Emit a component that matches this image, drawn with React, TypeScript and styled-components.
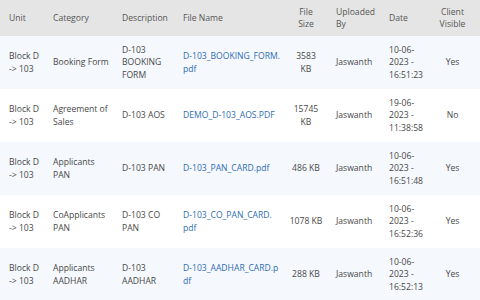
import React from 'react'
import styled, { createGlobalStyle } from 'styled-components'

const GlobalStyle = createGlobalStyle`
  body {
    margin: 0;
    background: #ffffff;
    font-family: 'Open Sans', 'Liberation Sans', sans-serif;
  }
`

const StyledTable = styled.table`
  width: 480px;
  border-collapse: collapse;
  table-layout: fixed;

  font-size: 8.6px;
  line-height: 12.5px;
  color: #484848;
`

const StyledHeadCell = styled.th<{ $center?: boolean }>`
  height: 36px;
  box-sizing: border-box;
  padding: 0 3px 0 9px;

  font-weight: 400;
  color: #555555;
  text-align: ${({ $center }) => ($center ? 'center' : 'left')};
  vertical-align: middle;

  background: #e5e5e5;

  ${({ $center }) => $center && 'padding: 0 4px;'}
`

const StyledRow = styled.tr<{ $shaded: boolean }>`
  background: ${({ $shaded }) => ($shaded ? '#f5f8fd' : '#ffffff')};
`

const StyledCell = styled.td<{ $center?: boolean }>`
  padding: 7.75px 3px 7.75px 9px;

  text-align: ${({ $center }) => ($center ? 'center' : 'left')};
  vertical-align: middle;

  ${({ $center }) => $center && 'padding-left: 4px; padding-right: 4px;'}
`

const StyledFileLink = styled.a`
  color: #2f6db3;
  text-decoration: none;
  white-space: nowrap;
`

const StyledLines = styled.span`
  white-space: nowrap;
`

interface Document {
  unit: string
  category: string
  description: string
  file: string[]
  size: string[]
  uploadedBy: string
  date: string
  visible: string
}

const documents: Document[] = [
  {
    unit: 'Block D -> 103',
    category: 'Booking Form',
    description: 'D-103 BOOKING FORM',
    file: ['D-103_BOOKING_FORM.', 'pdf'],
    size: ['3583', 'KB'],
    uploadedBy: 'Jaswanth',
    date: '10-06-2023 - 16:51:23',
    visible: 'Yes',
  },
  {
    unit: 'Block D -> 103',
    category: 'Agreement of Sales',
    description: 'D-103 AOS',
    file: ['DEMO_D-103_AOS.PDF'],
    size: ['15745', 'KB'],
    uploadedBy: 'Jaswanth',
    date: '19-06-2023 - 11:38:58',
    visible: 'No',
  },
  {
    unit: 'Block D -> 103',
    category: 'Applicants PAN',
    description: 'D-103 PAN',
    file: ['D-103_PAN_CARD.pdf'],
    size: ['486 KB'],
    uploadedBy: 'Jaswanth',
    date: '10-06-2023 - 16:51:48',
    visible: 'Yes',
  },
  {
    unit: 'Block D -> 103',
    category: 'CoApplicants PAN',
    description: 'D-103 CO PAN',
    file: ['D-103_CO_PAN_CARD.', 'pdf'],
    size: ['1078 KB'],
    uploadedBy: 'Jaswanth',
    date: '10-06-2023 - 16:52:36',
    visible: 'Yes',
  },
  {
    unit: 'Block D -> 103',
    category: 'Applicants AADHAR',
    description: 'D-103 AADHAR',
    file: ['D-103_AADHAR_CARD.p', 'df'],
    size: ['288 KB'],
    uploadedBy: 'Jaswanth',
    date: '10-06-2023 - 16:52:13',
    visible: 'Yes',
  },
]

const joinLines = (parts: string[]) =>
  parts.map((part, j) => (
    <React.Fragment key={part}>
      {j > 0 && <br />}
      {part}
    </React.Fragment>
  ))

const App: React.FC = () => (
  <>
    <GlobalStyle />
    <StyledTable>
      <colgroup>
        <col style={{ width: 44 }} />
        <col style={{ width: 69 }} />
        <col style={{ width: 61 }} />
        <col style={{ width: 111 }} />
        <col style={{ width: 42 }} />
        <col style={{ width: 53 }} />
        <col style={{ width: 45 }} />
        <col style={{ width: 55 }} />
      </colgroup>
      <thead>
        <tr>
          <StyledHeadCell>Unit</StyledHeadCell>
          <StyledHeadCell>Category</StyledHeadCell>
          <StyledHeadCell>Description</StyledHeadCell>
          <StyledHeadCell>File Name</StyledHeadCell>
          <StyledHeadCell $center>
            File
            <br />
            Size
          </StyledHeadCell>
          <StyledHeadCell>Uploaded By</StyledHeadCell>
          <StyledHeadCell>Date</StyledHeadCell>
          <StyledHeadCell $center>Client Visible</StyledHeadCell>
        </tr>
      </thead>
      <tbody>
        {documents.map((doc, i) => (
          <StyledRow key={doc.file.join('')} $shaded={i % 2 === 0}>
            <StyledCell>{doc.unit}</StyledCell>
            <StyledCell>{doc.category}</StyledCell>
            <StyledCell>{doc.description}</StyledCell>
            <StyledCell>
              <StyledFileLink href="#">{joinLines(doc.file)}</StyledFileLink>
            </StyledCell>
            <StyledCell $center>
              <StyledLines>{joinLines(doc.size)}</StyledLines>
            </StyledCell>
            <StyledCell>{doc.uploadedBy}</StyledCell>
            <StyledCell>{doc.date}</StyledCell>
            <StyledCell $center>{doc.visible}</StyledCell>
          </StyledRow>
        ))}
      </tbody>
    </StyledTable>
  </>
)

export default App
